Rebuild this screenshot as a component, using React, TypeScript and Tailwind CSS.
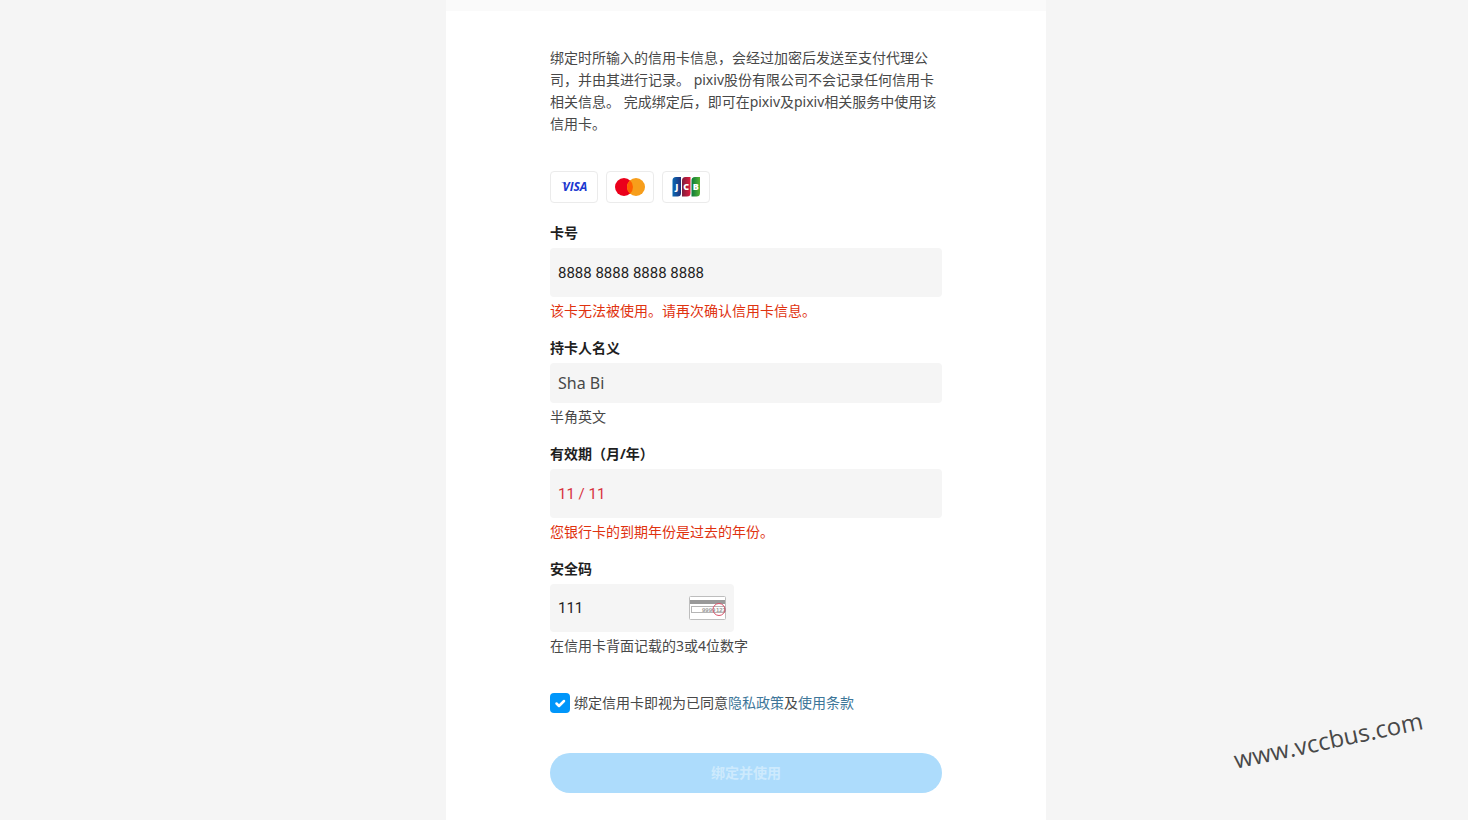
import { ReactNode } from "react";

function VisaLogo() {
    return (
        <svg viewBox="0 0 46 30" className="h-full w-full" role="img" aria-label="Visa">
            <text
                x="24"
                y="19"
                textAnchor="middle"
                fontFamily="'Open Sans', sans-serif"
                fontSize="12"
                fontWeight="700"
                fontStyle="italic"
                fill="#1a38d0"
            >
                VISA
            </text>
            <path d="M10 10.500h4.500l1.200 3C14.500 12 12.500 11 10 10.500z" fill="#1a38d0" />
        </svg>
    );
}

function MastercardLogo() {
    return (
        <svg viewBox="0 0 46 30" className="h-full w-full" role="img" aria-label="Mastercard">
            <circle cx="17" cy="15" r="9" fill="#eb001b" />
            <circle cx="29" cy="15" r="9" fill="#f79e1b" />
            <path
                d="M23 8.3a9 9 0 0 1 0 13.4a9 9 0 0 1 0-13.4z"
                fill="#ff5f00"
            />
        </svg>
    );
}

const jcbStripes = [
    { letter: "J", x: 9.5, fill: "url(#jcb-blue)" },
    { letter: "C", x: 19, fill: "url(#jcb-red)" },
    { letter: "B", x: 28.5, fill: "url(#jcb-green)" },
];

function JcbLogo() {
    return (
        <svg viewBox="0 0 46 30" className="h-full w-full" role="img" aria-label="JCB">
            <defs>
                <linearGradient id="jcb-blue">
                    <stop offset="0" stopColor="#0a6ab4" />
                    <stop offset="1" stopColor="#20307a" />
                </linearGradient>
                <linearGradient id="jcb-red">
                    <stop offset="0" stopColor="#7c1d3c" />
                    <stop offset="1" stopColor="#e11a3c" />
                </linearGradient>
                <linearGradient id="jcb-green">
                    <stop offset="0" stopColor="#0b7a3b" />
                    <stop offset="1" stopColor="#55b232" />
                </linearGradient>
            </defs>
            {jcbStripes.map(({ letter, x, fill }) => (
                <g key={letter} transform={`translate(${x} 5)`}>
                    <path d="M3.500 0H8.500V16a3.500 3.500 0 0 1-3.500 3.500H0V3.500A3.500 3.500 0 0 1 3.500 0z" fill={fill} />
                    <text
                        x="4.25"
                        y="13"
                        textAnchor="middle"
                        fontFamily="'Open Sans', sans-serif"
                        fontSize="9"
                        fontWeight="800"
                        fill="#fff"
                    >
                        {letter}
                    </text>
                </g>
            ))}
        </svg>
    );
}

function CardBackIcon() {
    return (
        <svg width="38" height="24" viewBox="0 0 38 24" aria-hidden="true">
            <rect x="1.5" y="0.5" width="36" height="23" rx="1" fill="#fff" stroke="#bdbdbd" />
            <rect x="2" y="4" width="35" height="4" fill="#999" />
            <rect x="3.5" y="10.500" width="33" height="6" fill="#fff" stroke="#b5b5b5" />
            <text x="14" y="16" fontFamily="'Liberation Sans', sans-serif" fontSize="6" fontWeight="700" fill="#999">
                9999
            </text>
            <text x="28" y="16" fontFamily="'Liberation Sans', sans-serif" fontSize="6" fontWeight="700" fill="#999">
                123
            </text>
            <circle cx="31" cy="13.500" r="6" fill="none" stroke="#d9536a" />
        </svg>
    );
}

const brands = [
    { id: "visa", logo: <VisaLogo /> },
    { id: "mastercard", logo: <MastercardLogo /> },
    { id: "jcb", logo: <JcbLogo /> },
];

type FieldProps = {
    id: string;
    label: string;
    value: string;
    note: string;
    error?: boolean;
    boxClass?: string;
    inputClass: string;
    icon?: ReactNode;
};

function Field({ id, label, value, note, error, boxClass = "", inputClass, icon }: FieldProps) {
    return (
        <div className="flex flex-col">
            <label htmlFor={id} className="font-bold text-[#1f1f1f]">
                {label}
            </label>
            <div className={`mt-1 flex items-center rounded bg-[#f5f5f5] px-2 ${boxClass}`}>
                <input
                    id={id}
                    type="text"
                    defaultValue={value}
                    aria-describedby={`${id}-note`}
                    className={`w-full min-w-0 flex-1 bg-transparent outline-none ${inputClass}`}
                />
                {icon}
            </div>
            <p id={`${id}-note`} className={`mt-[3px] ${error ? "text-[#e0320f]" : "text-[#484848]"}`}>
                {note}
            </p>
        </div>
    );
}

export default function App() {
    return (
        <div
            lang="zh-CN"
            className="relative min-h-screen overflow-hidden bg-[#f5f5f5] pl-6 font-['Noto_Sans','Noto_Sans_CJK_SC',sans-serif] text-sm leading-[22px] text-[#484848]"
        >
            <main className="mx-auto min-h-screen max-w-[600px] border-t-[11px] border-[#fafafa] bg-white px-[104px] pt-9 pb-[27px]">
                <p>
                    绑定时所输入的信用卡信息，会经过加密后发送至支付代理公司，并由其进行记录。 pixiv股份有限公司不会记录任何信用卡相关信息。
                    完成绑定后，即可在pixiv及pixiv相关服务中使用该信用卡。
                </p>
                <ul className="mt-9 flex gap-2">
                    {brands.map(({ id, logo }) => (
                        <li key={id} className="h-8 w-12 rounded border border-[#ebebeb]">
                            {logo}
                        </li>
                    ))}
                </ul>
                <form onSubmit={(e) => e.preventDefault()}>
                    <div className="mt-[19px] flex flex-col gap-[15px]">
                        <Field
                            id="card-number"
                            label="卡号"
                            value="8888 8888 8888 8888"
                            note="该卡无法被使用。请再次确认信用卡信息。"
                            error
                            boxClass="h-[49px]"
                            inputClass="font-[Roboto,sans-serif] text-[15px] text-[#1f1f1f]"
                        />
                        <Field
                            id="card-holder"
                            label="持卡人名义"
                            value="Sha Bi"
                            note="半角英文"
                            boxClass="h-10"
                            inputClass="text-base text-[#484848]"
                        />
                        <Field
                            id="expiry"
                            label="有效期（月/年）"
                            value="11 / 11"
                            note="您银行卡的到期年份是过去的年份。"
                            error
                            boxClass="h-[49px]"
                            inputClass="font-[Roboto,sans-serif] text-[15px] text-[#d8333f]"
                        />
                        <Field
                            id="cvc"
                            label="安全码"
                            value="111"
                            note="在信用卡背面记载的3或4位数字"
                            boxClass="h-12 w-[184px]"
                            inputClass="font-[Roboto,sans-serif] text-[15px] text-[#1f1f1f]"
                            icon={<CardBackIcon />}
                        />
                    </div>
                    <div className="mt-[35px] flex items-center gap-1">
                        <span className="relative size-5 shrink-0">
                            <input
                                id="agree"
                                type="checkbox"
                                defaultChecked
                                className="peer block size-5 appearance-none rounded bg-[#d6d6d6] checked:bg-[#0096fa]"
                            />
                            <svg
                                viewBox="0 0 20 20"
                                className="pointer-events-none absolute inset-0 hidden size-5 peer-checked:block"
                                fill="none"
                                stroke="#fff"
                                strokeWidth="2.5"
                                strokeLinecap="round"
                                strokeLinejoin="round"
                            >
                                <path d="M6.500 10.500l2.500 2.500 5-5" />
                            </svg>
                        </span>
                        <label htmlFor="agree">
                            绑定信用卡即视为已同意
                            <a href="#privacy" className="text-[#3d7699]">
                                隐私政策
                            </a>
                            及
                            <a href="#terms" className="text-[#3d7699]">
                                使用条款
                            </a>
                        </label>
                    </div>
                    <button
                        type="submit"
                        disabled
                        className="mt-[39px] h-10 w-full rounded-full bg-[#addcfc] font-bold text-[#cdeafd]"
                    >
                        绑定并使用
                    </button>
                </form>
            </main>
            <span className="absolute right-11 bottom-16 -rotate-12 font-['Open_Sans',sans-serif] text-2xl leading-8 text-[#484848]">
                www.vccbus.com
            </span>
        </div>
    );
}
